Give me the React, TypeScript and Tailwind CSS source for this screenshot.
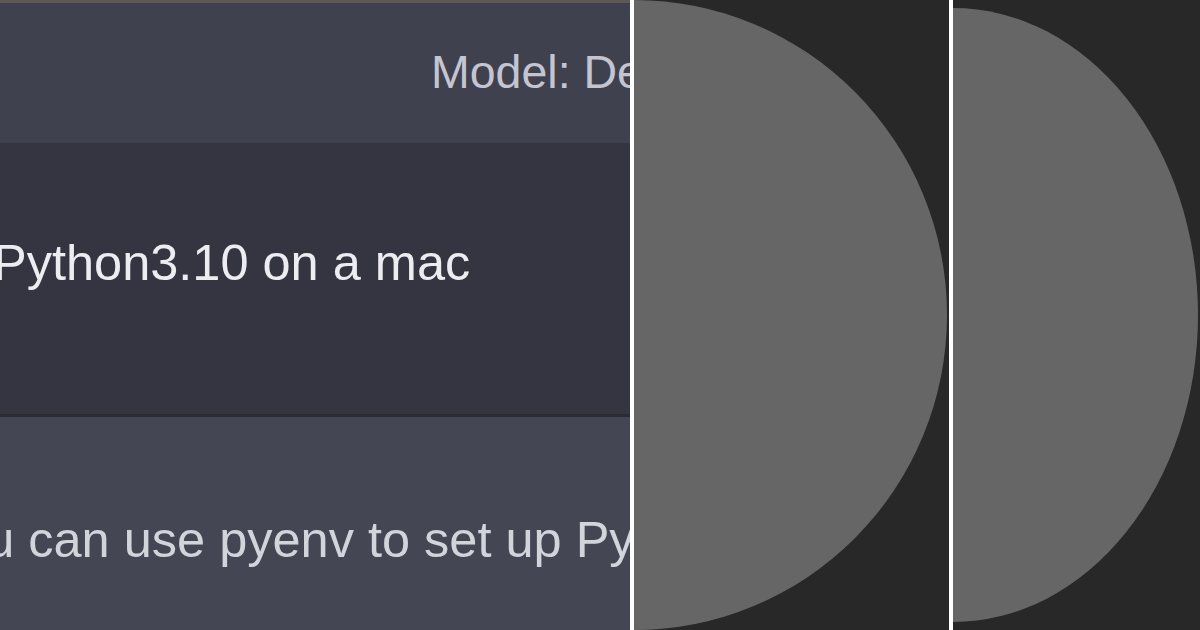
export default function App() {
  return (
    <div
      className="flex h-[630px] w-[1200px] overflow-hidden bg-white"
      style={{ fontFamily: '"Liberation Sans", Arial, sans-serif' }}
    >
      {/* Left: zoomed chat UI */}
      <div className="flex h-full w-[630px] shrink-0 flex-col overflow-hidden">
        <div className="h-[3px] shrink-0 bg-[#5c5956]" />
        <div className="flex h-[140px] shrink-0 items-center bg-[#40414f]">
          <span className="whitespace-nowrap pl-[431px] text-[46.5px] text-[#c5c5d2]">
            Model: Default (GPT-3.5)
          </span>
        </div>
        <div className="h-[271px] shrink-0 bg-[#343541] pt-[82px]">
          <p className="-ml-[7px] whitespace-nowrap text-[50.5px] leading-[75px] text-[#ececf1]">
            Python3.10 on a mac
          </p>
        </div>
        <div className="h-[3px] shrink-0 bg-[#2b2c33]" />
        <div className="flex-1 bg-[#444654] pt-[85px]">
          <p className="-ml-[71px] whitespace-nowrap text-[50.5px] leading-[75px] text-[#d1d5db]">
            You can use pyenv to set up Python3.10 on your Mac.
          </p>
        </div>
      </div>

      {/* Middle panel */}
      <div className="ml-[4px] flex h-full w-[315px] shrink-0 items-center bg-[#282828]">
        <div className="h-[630px] w-[313px] rounded-tr-[100%_50%] rounded-br-[100%_50%] bg-[#666666]" />
      </div>

      {/* Right panel */}
      <div className="ml-[4px] flex h-full flex-1 items-center bg-[#282828]">
        <div className="h-[614px] w-[245px] rounded-tr-[100%_50%] rounded-br-[100%_50%] bg-[#666666]" />
      </div>
    </div>
  );
}
